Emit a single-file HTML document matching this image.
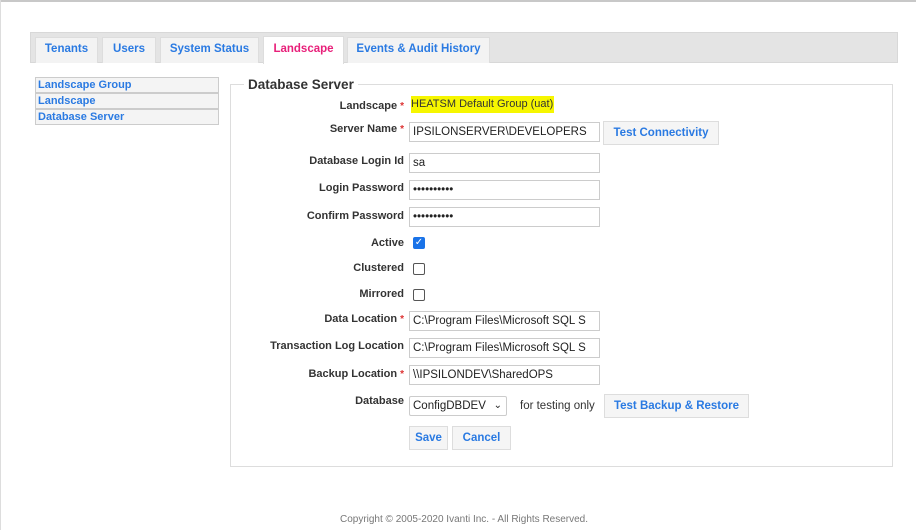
<!DOCTYPE html>
<html><head><style>
*{box-sizing:border-box}
body{margin:0;width:916px;height:530px;background:#fff;font-family:"Liberation Sans",Arial,sans-serif;font-size:11.5px;position:relative;overflow:hidden}
.top{position:absolute;left:0;top:0;width:916px;height:2px;background:#c8c8c8}
.lb{position:absolute;left:0;top:0;width:1px;height:530px;background:#ddd}
.bar{position:absolute;left:30px;top:32px;width:868px;height:31px;background:#e4e4e4;border:1px solid #d8d8d8}
.tab{position:absolute;top:37px;height:26px;background:#f3f3f3;border:1px solid #ddd;border-bottom:none;color:#2a7ae2;font-weight:bold;font-size:11.5px;text-align:center;line-height:23px;white-space:nowrap}
.tab.on{background:#fff;color:#e8207a;top:36px;height:28px;line-height:25px}
.nav{position:absolute;left:35px;width:184px;height:16px;border:1px solid #ccc;background:#f4f4f4;color:#2a7ae2;font-weight:bold;padding-left:2px;line-height:15px;font-size:11px}
.fs{position:absolute;left:230px;top:84px;width:663px;height:383px;border:1px solid #ddd}
.lg{position:absolute;left:244px;top:77px;background:#fff;padding:0 4px;font-weight:bold;font-size:13.5px;color:#333}
.l{position:absolute;right:512px;color:#333;font-weight:bold;font-size:11px;white-space:nowrap;margin-top:1px}
.l i{color:#d33;font-style:normal;font-size:10px;margin-left:3px}
.in{position:absolute;left:409px;width:191px;height:20px;border:1px solid #ccc;padding-left:3px;font-size:11.5px;line-height:18px;color:#222;white-space:nowrap;overflow:hidden}
.cb{position:absolute;left:413px;width:12px;height:12px;border:1px solid #555;border-radius:2px;background:#fff}
.btn{position:absolute;height:24px;border:1px solid #ddd;background:#f5f5f5;color:#2a7ae2;font-weight:bold;text-align:center;line-height:23px;white-space:nowrap}
</style></head><body>
<div class="top"></div><div class="lb"></div>
<div class="bar"></div>
<div class="tab" style="left:35px;width:63px">Tenants</div>
<div class="tab" style="left:102px;width:54px">Users</div>
<div class="tab" style="left:160px;width:99px">System Status</div>
<div class="tab on" style="left:263px;width:81px">Landscape</div>
<div class="tab" style="left:347px;width:143px">Events &amp; Audit History</div>
<div class="nav" style="top:77px">Landscape Group</div>
<div class="nav" style="top:93px">Landscape</div>
<div class="nav" style="top:109px">Database Server</div>
<div class="fs"></div>
<div class="lg">Database Server</div>
<div class="l" style="top:99px">Landscape<i>*</i></div>
<div style="position:absolute;left:411px;top:96px;width:143px;height:17px;background:#f6f600;color:#333;line-height:17px;white-space:nowrap;font-size:11px">HEATSM Default Group (uat)</div>
<div class="l" style="top:122px">Server Name<i>*</i></div>
<div class="in" style="top:122px">IPSILONSERVER\DEVELOPERS</div>
<div class="btn" style="left:603px;top:121px;width:116px">Test Connectivity</div>
<div class="l" style="top:154px;right:512px">Database Login Id</div>
<div class="in" style="top:153px">sa</div>
<div class="l" style="top:181px">Login Password</div>
<div class="in" style="top:180px">••••••••••</div>
<div class="l" style="top:209px">Confirm Password</div>
<div class="in" style="top:207px">••••••••••</div>
<div class="l" style="top:236px">Active</div>
<div class="cb" style="top:237px;background:#1a73e8;border-color:#1a73e8;color:#fff;font-size:10px;line-height:10px;text-align:center">✓</div>
<div class="l" style="top:261px">Clustered</div>
<div class="cb" style="top:263px"></div>
<div class="l" style="top:287px">Mirrored</div>
<div class="cb" style="top:289px"></div>
<div class="l" style="top:312px">Data Location<i>*</i></div>
<div class="in" style="top:311px">C:\Program Files\Microsoft SQL S</div>
<div class="l" style="top:339px">Transaction Log Location</div>
<div class="in" style="top:338px">C:\Program Files\Microsoft SQL S</div>
<div class="l" style="top:367px">Backup Location<i>*</i></div>
<div class="in" style="top:365px">\\IPSILONDEV\SharedOPS</div>
<div class="l" style="top:394px">Database</div>
<div class="in" style="top:396px;width:98px;border-radius:2px">ConfigDBDEV <span style="position:absolute;right:4px;font-size:10px">⌄</span></div>
<div style="position:absolute;left:520px;top:400px;color:#333">for testing only</div>
<div class="btn" style="left:604px;top:394px;width:145px">Test Backup &amp; Restore</div>
<div class="btn" style="left:409px;top:426px;width:39px">Save</div>
<div class="btn" style="left:452px;top:426px;width:59px">Cancel</div>
<div style="position:absolute;left:0;width:928px;top:514px;text-align:center;color:#777;font-size:10px">Copyright © 2005-2020 Ivanti Inc. - All Rights Reserved.</div>
</body></html>
